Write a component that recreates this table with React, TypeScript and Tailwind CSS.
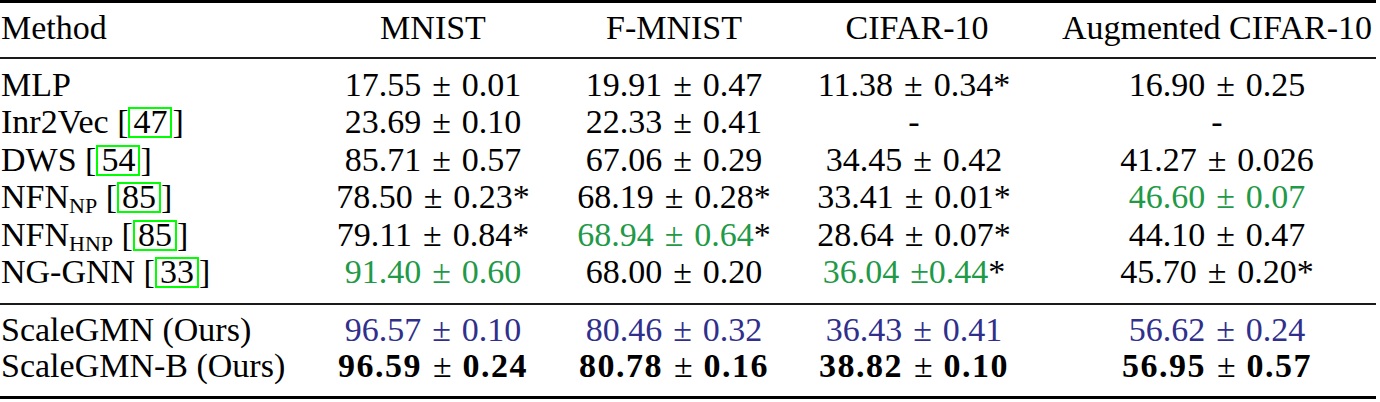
import React from 'react';

type Tone = 'plain' | 'green' | 'blue' | 'bold';

interface Cell {
  m: string;
  s: string;
  star?: boolean;
  tone?: Tone;
  tight?: boolean;
}

interface Row {
  name: React.ReactNode;
  cells: (Cell | null)[];
}

const cols = 'grid grid-cols-[288px_290px_192px_288px_318px]';

function Cite({ n }: { n: string }) {
  return (
    <span>
      [
      <span className="inline-block border-2 border-[#00ff00] px-[3px] pb-[2px] leading-[25px]">{n}</span>
      ]
    </span>
  );
}

function Sub({ t }: { t: string }) {
  return <span className="text-[22px] leading-[0] align-[-5px]">{t}</span>;
}

function Val({ c }: { c: Cell | null }) {
  if (!c) return <span>-</span>;
  const tone = c.tone ?? 'plain';
  const color = tone === 'green' ? 'text-[#1f9a48]' : tone === 'blue' ? 'text-[#30308c]' : 'text-black';
  const num = tone === 'bold' ? 'font-bold tracking-[1.5px]' : '';
  return (
    <span>
      <span className={color}>
        <span className={num}>{c.m}</span>
        <span className={c.tight ? 'ml-[11px]' : 'mx-[11px]'}>±</span>
        <span className={num}>{c.s}</span>
      </span>
      {c.star && <span className="text-black">*</span>}
    </span>
  );
}

const rows: Row[] = [
  {
    name: 'MLP',
    cells: [
      { m: '17.55', s: '0.01' },
      { m: '19.91', s: '0.47' },
      { m: '11.38', s: '0.34', star: true },
      { m: '16.90', s: '0.25' },
    ],
  },
  {
    name: <>Inr2Vec <Cite n="47" /></>,
    cells: [{ m: '23.69', s: '0.10' }, { m: '22.33', s: '0.41' }, null, null],
  },
  {
    name: <>DWS <Cite n="54" /></>,
    cells: [
      { m: '85.71', s: '0.57' },
      { m: '67.06', s: '0.29' },
      { m: '34.45', s: '0.42' },
      { m: '41.27', s: '0.026' },
    ],
  },
  {
    name: <>NFN<Sub t="NP" /> <Cite n="85" /></>,
    cells: [
      { m: '78.50', s: '0.23', star: true },
      { m: '68.19', s: '0.28', star: true },
      { m: '33.41', s: '0.01', star: true },
      { m: '46.60', s: '0.07', tone: 'green' },
    ],
  },
  {
    name: <>NFN<Sub t="HNP" /> <Cite n="85" /></>,
    cells: [
      { m: '79.11', s: '0.84', star: true },
      { m: '68.94', s: '0.64', star: true, tone: 'green' },
      { m: '28.64', s: '0.07', star: true },
      { m: '44.10', s: '0.47' },
    ],
  },
  {
    name: <>NG-GNN <Cite n="33" /></>,
    cells: [
      { m: '91.40', s: '0.60', tone: 'green' },
      { m: '68.00', s: '0.20' },
      { m: '36.04', s: '0.44', star: true, tone: 'green', tight: true },
      { m: '45.70', s: '0.20', star: true },
    ],
  },
];

const ours: Row[] = [
  {
    name: 'ScaleGMN (Ours)',
    cells: [
      { m: '96.57', s: '0.10', tone: 'blue' },
      { m: '80.46', s: '0.32', tone: 'blue' },
      { m: '36.43', s: '0.41', tone: 'blue' },
      { m: '56.62', s: '0.24', tone: 'blue' },
    ],
  },
  {
    name: 'ScaleGMN-B (Ours)',
    cells: [
      { m: '96.59', s: '0.24', tone: 'bold' },
      { m: '80.78', s: '0.16', tone: 'bold' },
      { m: '38.82', s: '0.10', tone: 'bold' },
      { m: '56.95', s: '0.57', tone: 'bold' },
    ],
  },
];

function TableRow({ row, lh }: { row: Row; lh: string }) {
  return (
    <div className={`${cols} ${lh}`}>
      <div className="whitespace-nowrap pl-[1px]">{row.name}</div>
      {row.cells.map((c, i) => (
        <div key={i} className="flex justify-center whitespace-nowrap">
          <Val c={c} />
        </div>
      ))}
    </div>
  );
}

export default function App() {
  return (
    <div className="min-h-screen bg-white">
      <div className="w-[1376px] font-['Liberation_Serif',serif] text-[34px] text-black">
        <div className="h-[3px] bg-black" />

        {/* Header */}
        <div className={`${cols} pt-[6px] pb-[10px] leading-[37.5px]`}>
          <div className="pl-[1px]">Method</div>
          <div className="flex justify-center">MNIST</div>
          <div className="flex justify-center">F-MNIST</div>
          <div className="flex justify-center pl-[6px]">CIFAR-10</div>
          <div className="flex justify-center whitespace-nowrap">Augmented CIFAR-10</div>
        </div>
        <div className="h-[2px] bg-[#1a1a1a]" />

        {/* Baselines */}
        <div className="pt-[7px] pb-[12px]">
          {rows.map((r, i) => (
            <TableRow key={i} row={r} lh="leading-[37.5px]" />
          ))}
        </div>
        <div className="h-[2px] bg-[#1a1a1a]" />

        {/* Ours */}
        <div className="pt-[7px] pb-[11px]">
          {ours.map((r, i) => (
            <TableRow key={i} row={r} lh="leading-[36.5px]" />
          ))}
        </div>
        <div className="h-[3px] bg-black" />
      </div>
    </div>
  );
}
